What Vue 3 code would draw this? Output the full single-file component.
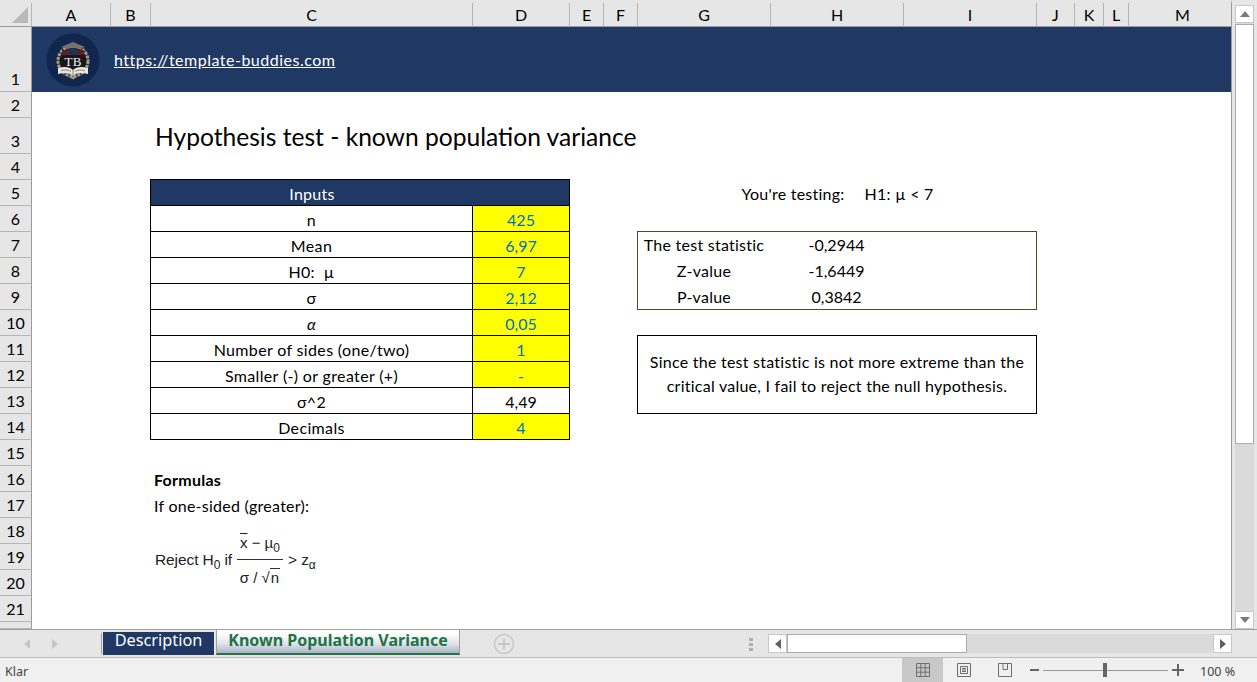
<script setup>
const columns = ['A','B','C','D','E','F','G','H','I','J','K','L','M']
const rowLabels = Array.from({ length: 22 }, (_, i) => (i < 21 ? String(i + 1) : ''))
const inputs = [
  { label: 'n', value: '425', input: true },
  { label: 'Mean', value: '6,97', input: true },
  { label: 'H0:  µ', value: '7', input: true },
  { label: 'σ', value: '2,12', input: true },
  { label: 'α', value: '0,05', input: true, italic: true },
  { label: 'Number of sides (one/two)', value: '1', input: true },
  { label: 'Smaller (-) or greater (+)', value: '-', input: true },
  { label: 'σ^2', value: '4,49', input: false },
  { label: 'Decimals', value: '4', input: true },
]
const stats = [
  ['The test statistic', '-0,2944'],
  ['Z-value', '-1,6449'],
  ['P-value', '0,3842'],
]
</script>

<template>
  <div class="app">
    <div class="main">
      <div class="sheet">
        <div class="corner"><svg width="16" height="16" viewBox="0 0 16 16"><path d="M16 0V16H0Z" fill="#b9b9b9"/></svg></div>
        <div v-for="(c, i) in columns" :key="c" class="col-head" :style="{ gridColumn: i + 2 }">{{ c }}</div>
        <div v-for="(r, i) in rowLabels" :key="i" class="row-head" :style="{ gridRow: i + 2 }">{{ r }}</div>

        <div class="banner">
          <svg class="logo" width="54" height="54" viewBox="0 0 54 54">
            <circle cx="27" cy="27" r="26.5" fill="#10264c"/>
            <circle cx="27" cy="28" r="15" fill="#17171c" stroke="#a89a85" stroke-width="3" stroke-dasharray="3 1"/>
            <path d="M15 14 27 9 39 14 27 17.500Z" fill="#77736c"/>
            <path d="M16 17H38V22H16Z" fill="#5e1f24"/>
            <path d="M23 15H31V22H23Z" fill="#1d3354"/>
            <text x="27" y="33" class="logo-text" text-anchor="middle">TB</text>
            <path d="M12 35C19 33 24 34 27 37 30 34 35 33 42 35V41C35 39 30 40 27 43 24 40 19 39 12 41Z" fill="#e9e6de"/>
            <path d="M27 37V43M15 37.500C20 36.500 23 37 25 38.500M39 37.500C34 36.500 31 37 29 38.500" stroke="#6a6a72" stroke-width=".8" fill="none"/>
            <path d="M22 43.500H32L27 46.500Z" fill="#a89a85"/>
          </svg>
          <a class="link">https://template-buddies.com</a>
        </div>

        <div class="title">Hypothesis test - known population variance</div>

        <div class="inputs">
          <div class="inputs-head">Inputs</div>
          <template v-for="row in inputs" :key="row.label">
            <div class="in-label" :class="{ italic: row.italic }">{{ row.label }}</div>
            <div class="in-value" :class="{ 'is-input': row.input }">{{ row.value }}</div>
          </template>
        </div>

        <div class="testing"><span>You're testing:</span><span>H1: µ &lt; 7</span></div>

        <div class="stats">
          <template v-for="s in stats" :key="s[0]">
            <div class="stat">{{ s[0] }}</div>
            <div class="stat-num">{{ s[1] }}</div>
            <div></div>
          </template>
        </div>

        <div class="conclusion">
          Since the test statistic is not more extreme than the<br />critical value, I fail to reject the null hypothesis.
        </div>

        <div class="f-head">Formulas</div>
        <div class="f-sub">If one-sided (greater):</div>
        <div class="formula">
          <span>Reject H<sub>0</sub> if</span>
          <span class="frac">
            <span class="num"><span class="xbar">x</span> − µ<sub>0</sub></span>
            <span class="den">σ / √<span class="rad">n</span></span>
          </span>
          <span>&gt; z<sub>α</sub></span>
        </div>
      </div>

      <div class="vscroll">
        <div class="sb-btn"><svg width="10" height="6" viewBox="0 0 10 6"><path d="M5 0 10 6H0Z" fill="#7a7a7a"/></svg></div>
        <div class="v-track"><div class="v-thumb"></div></div>
        <div class="sb-btn"><svg width="10" height="6" viewBox="0 0 10 6"><path d="M0 0H10L5 6Z" fill="#7a7a7a"/></svg></div>
      </div>
    </div>

    <div class="tabbar">
      <div class="nav">
        <svg width="6" height="10" viewBox="0 0 6 10"><path d="M6 0V10L0 5Z" fill="#c6c6c6"/></svg>
        <svg width="6" height="10" viewBox="0 0 6 10"><path d="M0 0V10L6 5Z" fill="#c6c6c6"/></svg>
      </div>
      <div class="tab-sep"></div>
      <div class="tab tab-plain">Description</div>
      <div class="tab tab-active">Known Population Variance</div>
      <svg class="add" width="22" height="22" viewBox="0 0 22 22">
        <circle cx="11" cy="11" r="9.500" fill="none" stroke="#c8c8c8" stroke-width="1.500"/>
        <path d="M11 5.500V16.500M5.500 11H16.500" stroke="#c8c8c8" stroke-width="2"/>
      </svg>
      <div class="dots"><i></i><i></i><i></i></div>
      <div class="hscroll">
        <div class="h-btn"><svg width="6" height="10" viewBox="0 0 6 10"><path d="M6 0V10L0 5Z" fill="#606060"/></svg></div>
        <div class="h-thumb"></div>
        <div class="h-track"></div>
        <div class="h-btn"><svg width="6" height="10" viewBox="0 0 6 10"><path d="M0 0V10L6 5Z" fill="#606060"/></svg></div>
      </div>
    </div>

    <div class="status">
      <span class="klar">Klar</span>
      <div class="view view-on">
        <svg width="14" height="14" viewBox="0 0 14 14"><path d="M.5.500H13.500V13.500H.5ZM.5 4.800H13.500M.5 9.200H13.500M4.800.5V13.500M9.200.5V13.500" fill="none" stroke="#6e6e6e"/></svg>
      </div>
      <div class="view">
        <svg width="14" height="14" viewBox="0 0 14 14"><path d="M.5.500H13.500V13.500H.5ZM3.500 3.500H10.500V10.500H3.500ZM5 5.500H9M5 7H9M5 8.500H9" fill="none" stroke="#6e6e6e"/></svg>
      </div>
      <div class="view">
        <svg width="14" height="14" viewBox="0 0 14 14"><path d="M.5.500H13.500V13.500H.5ZM5 .5V6.500H9.500V.5" fill="none" stroke="#6e6e6e"/></svg>
      </div>
      <div class="zoom">
        <span class="z-minus"></span>
        <div class="z-line"><span class="z-thumb"></span></div>
        <svg width="12" height="12" viewBox="0 0 12 12"><path d="M6 0V12M0 6H12" stroke="#666" stroke-width="2"/></svg>
      </div>
      <span class="pct">100 %</span>
    </div>
  </div>
</template>

<style>
html, body { margin: 0; padding: 0; }
</style>

<style scoped>
.app {
  width: 1257px;
  height: 682px;
  display: flex;
  flex-direction: column;
  overflow: hidden;
  background: #e6e6e6;
  font-family: Lato, "Noto Sans", sans-serif;
  font-size: 16px;
  letter-spacing: .25px;
  color: #000;
}
.main { display: flex; height: 629px; }
.sheet {
  width: 1232px;
  box-sizing: border-box;
  height: 629px;
  border-top: 3px solid #e6e6e6;
  border-right: 1px solid #9c9c9c;
  background: #fff;
  overflow: hidden;
  display: grid;
  grid-template-columns: 32px 79px 40px 322px 97px 34px 34px 133px 133px 133px 38px 29px 25px 108px;
  grid-template-rows: 24px 65px 26px 36px repeat(18, 26px) 7px;
}
.corner {
  grid-column: 1;
  grid-row: 1;
  background: #e6e6e6;
  border-right: 1px solid #b5b5b5;
  border-bottom: 1px solid #9c9c9c;
  display: flex;
  align-items: flex-end;
  justify-content: flex-end;
  padding: 0 3px 3px 0;
}
.col-head {
  grid-row: 1;
  background: #e6e6e6;
  border-right: 1px solid #b5b5b5;
  border-bottom: 1px solid #9c9c9c;
  box-sizing: border-box;
  text-align: center;
  line-height: 24px;
  letter-spacing: 0;
}
.row-head {
  grid-column: 1;
  background: #e6e6e6;
  border-right: 1px solid #9c9c9c;
  border-bottom: 1px solid #b5b5b5;
  box-sizing: border-box;
  display: flex;
  align-items: flex-end;
  justify-content: center;
  padding-bottom: 2px;
  line-height: 20px;
  letter-spacing: 0;
}
.banner {
  grid-column: 2 / -1;
  grid-row: 2;
  background: #1f3864;
  display: flex;
  align-items: center;
  padding-left: 14px;
}
.logo { display: block; margin-right: 14px; }
.logo-text { font: 13px "Liberation Serif", serif; fill: #f2f2f2; }
.link { color: #fff; text-decoration: underline; font-size: 16px; letter-spacing: .5px; }
.title {
  grid-column: 4 / 10;
  grid-row: 4;
  padding: 1px 0 0 4px;
  font-size: 24.6px;
  letter-spacing: 0;
  line-height: 36px;
  white-space: nowrap;
}
.inputs {
  grid-column: 4 / 6;
  grid-row: 5 / span 11;
  align-self: start;
  margin: 25px 0 0 -1px;
  box-sizing: border-box;
  width: 420px;
  border: 1px solid #000;
  border-bottom: 0;
  display: grid;
  grid-template-columns: 322px 96px;
  grid-auto-rows: 26px;
  text-align: center;
  line-height: 27px;
}
.inputs-head {
  grid-column: 1 / -1;
  background: #1f3864;
  color: #fff;
  border-bottom: 1px solid #000;
  padding-right: 96px;
  box-sizing: border-box;
}
.in-label { border-bottom: 1px solid #000; border-right: 1px solid #000; box-sizing: border-box; white-space: pre; letter-spacing: .35px; }
.in-value { border-bottom: 1px solid #000; box-sizing: border-box; letter-spacing: 0; }
.italic { font-style: italic; }
.is-input { background: #ffff00; color: #0070c0; }
.testing {
  grid-column: 8 / 11;
  grid-row: 6;
  display: flex;
  justify-content: center;
  gap: 20px;
  line-height: 28px;
}
.stats {
  grid-column: 8 / 11;
  grid-row: 7 / span 4;
  margin: 25px 0 0 -1px;
  align-self: start;
  box-sizing: border-box;
  width: 400px;
  height: 79px;
  border: 1px solid #375623;
  display: grid;
  grid-template-columns: 132px 133px 1fr;
  grid-auto-rows: 26px;
  text-align: center;
  line-height: 26px;
}
.stat-num { letter-spacing: 0; }
.conclusion {
  grid-column: 8 / 11;
  grid-row: 11 / span 4;
  margin: 25px 0 0 -1px;
  align-self: start;
  box-sizing: border-box;
  width: 400px;
  height: 79px;
  border: 1px solid #000;
  text-align: center;
  line-height: 24px;
  padding-top: 14px;
}
.f-head { grid-column: 4 / 6; grid-row: 17; font-weight: 700; padding-left: 3px; line-height: 27px; }
.f-sub { grid-column: 4 / 6; grid-row: 18; padding-left: 3px; line-height: 27px; }
.formula {
  grid-column: 4 / 6;
  grid-row: 19 / span 3;
  display: flex;
  align-items: center;
  gap: 5px;
  padding: 6px 0 0 4px;
  font-family: "Liberation Sans", sans-serif;
  font-size: 15.5px;
  letter-spacing: -.1px;
  color: #222;
}
.formula sub { font-size: 12px; line-height: 0; }
.frac { display: inline-flex; flex-direction: column; align-items: center; width: 46px; font-size: 15px; letter-spacing: 0; white-space: nowrap; }
.num { padding-bottom: 5px; line-height: 22px; border-bottom: 1px solid #333; width: 100%; text-align: center; }
.den { padding-top: 7px; line-height: 22px; }
.xbar { text-decoration: overline; }
.rad { border-top: 1px solid #333; padding: 0 1px; }
.vscroll {
  width: 25px;
  box-sizing: border-box;
  padding: 5px 3px 0;
  display: flex;
  flex-direction: column;
}
.sb-btn {
  height: 18px;
  background: #fff;
  border: 1px solid #c8c8c8;
  box-sizing: border-box;
  display: flex;
  align-items: center;
  justify-content: center;
}
.v-track { flex: 1; background: #dadada; }
.v-thumb { height: 420px; margin-top: 1px; box-sizing: border-box; background: #fff; border: 1px solid #ababab; }
.tabbar {
  height: 29px;
  box-sizing: border-box;
  border-bottom: 1px solid #bdbdbd;
  border-top: 1px solid #a0a0a0;
  display: flex;
  align-items: flex-start;
  font-family: "Noto Sans", sans-serif;
  letter-spacing: 0;
}
.nav { width: 101px; padding: 9px 0 0 24px; box-sizing: border-box; display: flex; gap: 22px; }
.nav svg { display: block; }
.tab-sep { width: 1px; height: 21px; margin: 3px 1px 0 0; background: #a0a0a0; }
.tab { white-space: nowrap; }
.tab-plain {
  width: 111px;
  height: 23px;
  margin-top: 2px;
  background: #1f3864;
  color: #fff;
  text-align: center;
  font-size: 16.300px;
  line-height: 16px;
}
.tab-active {
  width: 244px;
  height: 26px;
  margin: -1px 0 0 2px;
  box-sizing: border-box;
  border: 1px solid #a0a0a0;
  border-bottom: 2px solid #217346;
  background: linear-gradient(#fff 15%, #dfe3ea 60%, #a9b4c6);
  color: #217346;
  font-weight: 700;
  font-size: 16px;
  line-height: 21px;
  text-align: center;
}
.add { margin: 3px 0 0 33px; display: block; }
.dots { margin: 8px 0 0 234px; display: flex; flex-direction: column; gap: 2px; }
.dots i { display: block; width: 4px; height: 3px; background: #b0b0b0; }
.hscroll {
  margin: 4px 0 0 15px;
  width: 464px;
  height: 19px;
  display: flex;
}
.h-btn {
  width: 19px;
  box-sizing: border-box;
  background: #fff;
  border: 1px solid #c8c8c8;
  display: flex;
  align-items: center;
  justify-content: center;
}
.h-thumb { width: 180px; box-sizing: border-box; background: #fff; border: 1px solid #ababab; }
.h-track { flex: 1; background: #dadada; }
.status {
  height: 24px;
  background: #f0f0f0;
  display: flex;
  align-items: center;
  font-family: "Noto Sans", sans-serif;
  font-size: 12.500px;
  letter-spacing: 0;
  color: #444;
}
.klar { padding: 2px 0 0 5px; width: 897px; }
.view {
  width: 41px;
  height: 24px;
  display: flex;
  align-items: center;
  justify-content: center;
}
.view-on { background: #c8c8c8; }
.zoom { display: flex; align-items: center; margin-left: 5px; }
.z-minus { width: 9px; height: 2px; background: #666; margin-right: 4px; }
.z-line { position: relative; width: 125px; height: 1px; background: #999; margin-right: 4px; }
.z-thumb { position: absolute; left: 60px; top: -7px; width: 4px; height: 14px; background: #666; }
.pct { margin-left: 16px; padding-top: 2px; }
</style>
